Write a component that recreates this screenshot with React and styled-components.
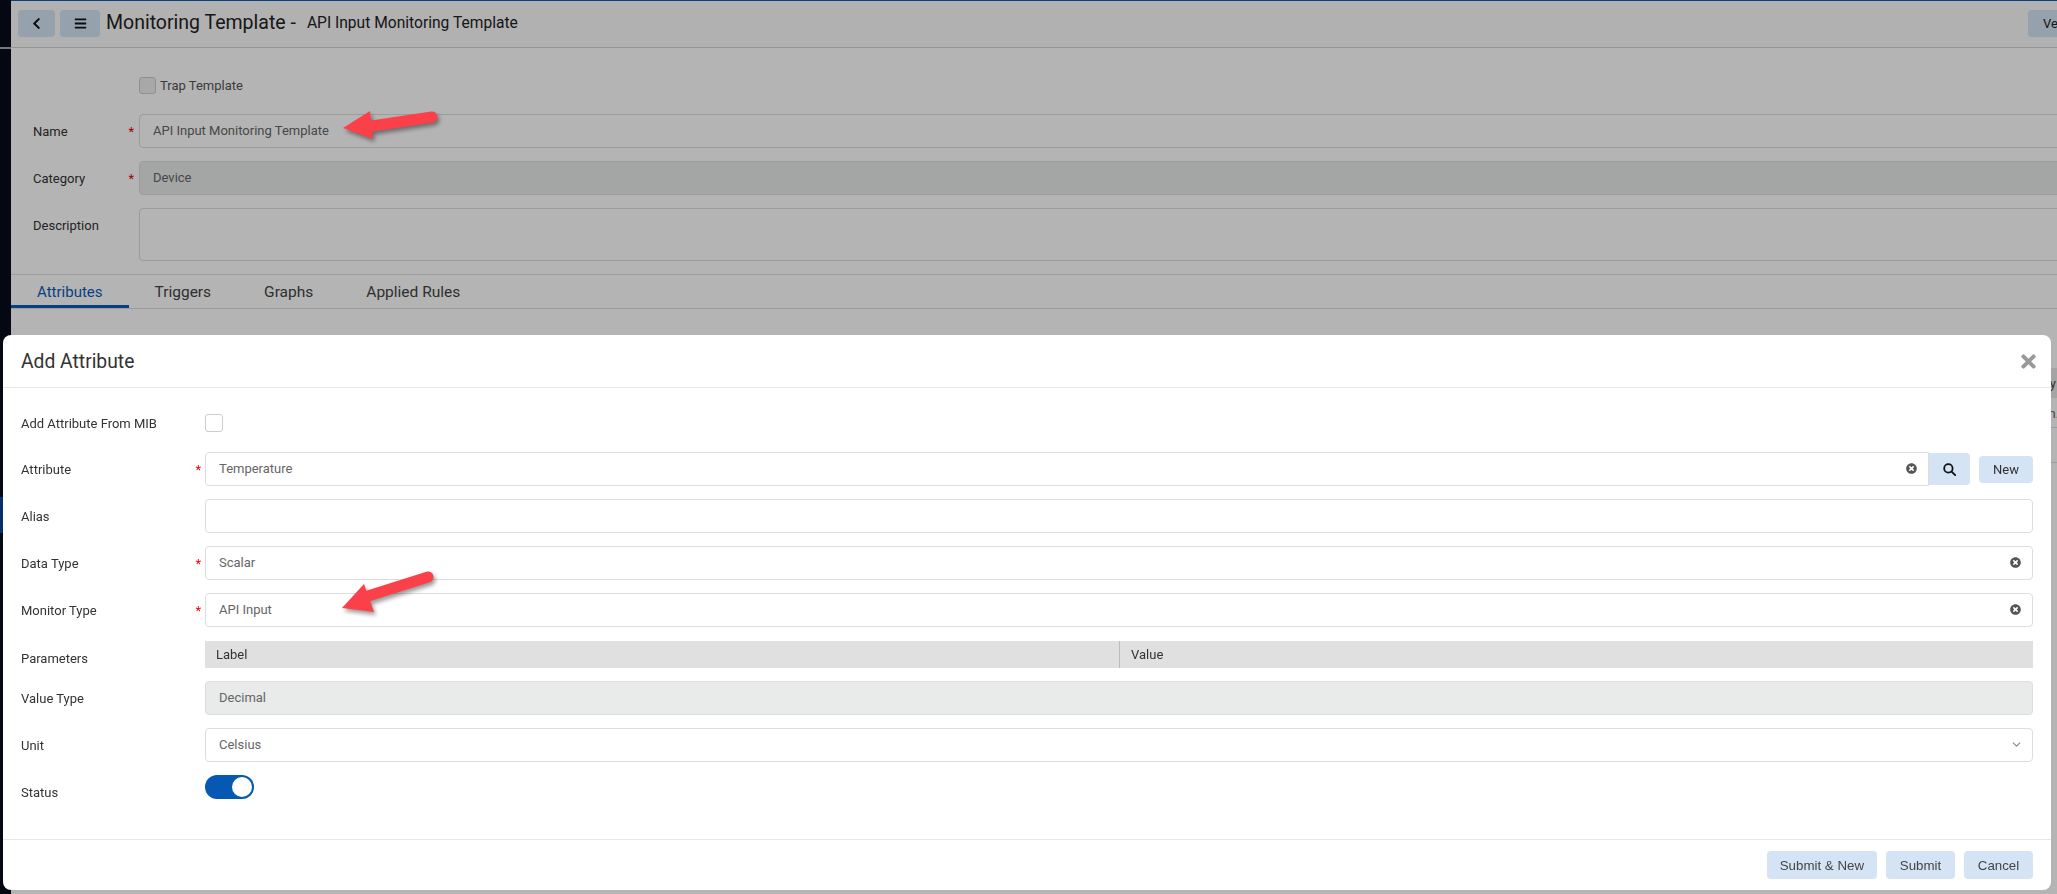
import React from "react";
import styled, { createGlobalStyle } from "styled-components";
import { FaBars, FaChevronLeft, FaTimes, FaTimesCircle } from "react-icons/fa";
import { FiChevronDown } from "react-icons/fi";

const GlobalStyle = createGlobalStyle`
  html, body {
    margin: 0;
    height: 100%;
    overflow: hidden;
    background: #fff;
    font-family: Roboto, "Liberation Sans", sans-serif;
    font-size: 13px;
    color: #333;
  }
  * { box-sizing: border-box; }
`;

const App = () => {
  return (
    <>
      <GlobalStyle />
      <Page>
        <Sidebar>
          <SidebarLogo />
          <SidebarActive />
        </Sidebar>
        <Main>
          <Header>
            <IconButton width={37}>
              <FaChevronLeft size={13} />
            </IconButton>
            <IconButton width={40}>
              <FaBars size={13} />
            </IconButton>
            <PageTitle>Monitoring Template -</PageTitle>
            <PageSubtitle>API Input Monitoring Template</PageSubtitle>
            <VersionButton>Version</VersionButton>
          </Header>
          <TemplateForm>
            <TrapRow>
              <TrapBox />
              <span>Trap Template</span>
            </TrapRow>
            <PageRow>
              <PageLabel>
                Name <Required>*</Required>
              </PageLabel>
              <Field>API Input Monitoring Template</Field>
            </PageRow>
            <PageRow>
              <PageLabel>
                Category <Required>*</Required>
              </PageLabel>
              <Field disabled>Device</Field>
            </PageRow>
            <PageRow>
              <PageLabel>Description</PageLabel>
              <TextArea />
            </PageRow>
          </TemplateForm>
          <Tabs>
            <Tab active>Attributes</Tab>
            <Tab>Triggers</Tab>
            <Tab>Graphs</Tab>
            <Tab>Applied Rules</Tab>
          </Tabs>
          <AttributeTable>
            <TableHead>Frequency</TableHead>
            <TableCell>Celsius n.</TableCell>
            <TableCell />
          </AttributeTable>
        </Main>
      </Page>

      <Backdrop>
        <Modal>
          <ModalHeader>
            <ModalTitle>Add Attribute</ModalTitle>
            <CloseIcon>
              <FaTimes size={21} />
            </CloseIcon>
          </ModalHeader>
          <ModalBody>
            <CheckRow>
              <Label>Add Attribute From MIB</Label>
              <CheckBox />
            </CheckRow>
            <Row>
              <Label>
                Attribute <Required>*</Required>
              </Label>
              <InputGroup>
                <Field>
                  Temperature
                  <ClearIcon>
                    <FaTimesCircle size={11} />
                  </ClearIcon>
                </Field>
                <SearchButton>
                  <svg width="13" height="13" viewBox="0 0 13 13" fill="none" stroke="#111" strokeWidth="1.8">
                    <circle cx="5.4" cy="5.4" r="4.2" />
                    <path d="M8.6 8.6L12.2 12.2" strokeLinecap="round" />
                  </svg>
                </SearchButton>
                <NewButton>New</NewButton>
              </InputGroup>
            </Row>
            <Row>
              <Label>Alias</Label>
              <Field />
            </Row>
            <Row>
              <Label>
                Data Type <Required>*</Required>
              </Label>
              <Field>
                Scalar
                <ClearIcon>
                  <FaTimesCircle size={11} />
                </ClearIcon>
              </Field>
            </Row>
            <Row>
              <Label>
                Monitor Type <Required>*</Required>
              </Label>
              <Field>
                API Input
                <ClearIcon>
                  <FaTimesCircle size={11} />
                </ClearIcon>
              </Field>
            </Row>
            <ParamsRow>
              <Label drop={8}>Parameters</Label>
              <ParamsHead>
                <ParamsCol>Label</ParamsCol>
                <ParamsCol>Value</ParamsCol>
              </ParamsHead>
            </ParamsRow>
            <Row>
              <Label>Value Type</Label>
              <Field disabled>Decimal</Field>
            </Row>
            <Row>
              <Label>Unit</Label>
              <Field>
                Celsius
                <ChevronIcon>
                  <FiChevronDown size={13} />
                </ChevronIcon>
              </Field>
            </Row>
            <Row>
              <Label drop={10}>Status</Label>
              <Toggle>
                <ToggleKnob />
              </Toggle>
            </Row>
          </ModalBody>
          <ModalFooter>
            <FooterButton>Submit &amp; New</FooterButton>
            <FooterButton>Submit</FooterButton>
            <FooterButton>Cancel</FooterButton>
          </ModalFooter>
        </Modal>
      </Backdrop>

      <Arrow viewBox="0 0 110 45" width="110" height="45" left={335} top={105}>
        <line x1="37" y1="21" x2="97" y2="12" />
        <polygon points="8,23 35,6 38,34" />
      </Arrow>
      <Arrow viewBox="0 0 110 55" width="110" height="55" left={335} top={565}>
        <line x1="33" y1="31" x2="93" y2="12" />
        <polygon points="7,43 29,19 39,47" />
      </Arrow>
    </>
  );
};

const Page = styled.div`
  display: flex;
  height: 894px;
  overflow: hidden;
`;

const Sidebar = styled.aside`
  flex: none;
  width: 11px;
  background: #050c1a;
`;

const SidebarLogo = styled.div`
  height: 49px;
  border-bottom: 2px solid #aaa;
  margin-bottom: 448px;
`;

const SidebarActive = styled.div`
  height: 36px;
  background: #064698;
`;

const Main = styled.main`
  flex: none;
  width: 2099px;
  border-top: 1px solid #0a5cb8;
`;

const Header = styled.header`
  display: flex;
  align-items: center;
  height: 47px;
  padding: 0 2px 2px 7px;
  border-bottom: 1px solid #d4d4d4;
  background: #fbfbfb;
`;

const IconButton = styled.button`
  display: flex;
  align-items: center;
  justify-content: center;
  width: ${(props) => props.width}px;
  height: 27px;
  margin-right: 5px;
  padding: 0;
  border: 0;
  border-radius: 4px;
  background: #d4e4f4;
  color: #111;
`;

const PageTitle = styled.h1`
  margin: 0 0 2px 1px;
  font-size: 19.5px;
  font-weight: 400;
  color: #222;
`;

const PageSubtitle = styled.h2`
  margin: 0 0 0 11px;
  font-size: 15.6px;
  font-weight: 400;
  color: #222;
`;

const VersionButton = styled.button`
  margin-left: auto;
  width: 80px;
  height: 27px;
  padding: 0 0 0 15px;
  border: 0;
  border-radius: 4px;
  background: #d4e4f4;
  font: inherit;
  text-align: left;
  color: #222;
`;

const TemplateForm = styled.section`
  padding: 29px 0 13px 22px;
  border-bottom: 1px solid #ddd;
`;

const TrapRow = styled.label`
  display: flex;
  align-items: center;
  gap: 4px;
  height: 17px;
  margin: 0 0 20px 106px;
  color: #555;
  font-size: 13px;
`;

const TrapBox = styled.span`
  width: 17px;
  height: 17px;
  border: 1px solid #ccc;
  border-radius: 3px;
  background: #eee;
`;

const PageRow = styled.div`
  display: grid;
  grid-template-columns: 106px 1fr;
  margin-bottom: 13px;

  &:last-child {
    margin-bottom: 0;
  }
`;

const PageLabel = styled.label`
  display: flex;
  justify-content: space-between;
  align-items: flex-start;
  height: 34px;
  padding: 10px 5px 0 0;
  color: #333;
`;

const Required = styled.span`
  color: #e00;
  font-size: 13px;
`;

const Field = styled.div`
  position: relative;
  flex: 1;
  display: flex;
  align-items: center;
  height: 34px;
  padding: 0 13px 2px;
  border: 1px solid #ddd;
  border-radius: 4px;
  background: ${(props) => (props.disabled ? "#e9ebeb" : "#fff")};
  color: #666;
`;

const TextArea = styled(Field)`
  height: 53px;
`;

const Tabs = styled.nav`
  display: flex;
  height: 34px;
  border-bottom: 1px solid #ddd;
`;

const Tab = styled.a`
  display: flex;
  align-items: center;
  height: 33px;
  padding: 3px ${(props) => (props.active ? 26 : 27)}px 0 26px;
  border-bottom: 3px solid ${(props) => (props.active ? "#0a5cb8" : "transparent")};
  font-size: ${(props) => (props.active ? 15 : 15.5)}px;
  color: ${(props) => (props.active ? "#0a5cb8" : "#444")};
`;

const AttributeTable = styled.section`
  margin-top: 59px;
`;

const TableHead = styled.div`
  height: 30px;
  padding: 8px 0 0 1985px;
  background: #e8e8e8;
  color: #444;
`;

const TableCell = styled.div`
  height: ${(props) => (props.children ? 30 : 35)}px;
  padding: 8px 0 0 1992px;
  border-bottom: 1px solid #ddd;
  color: #666;
  white-space: nowrap;
`;

const Backdrop = styled.div`
  position: fixed;
  inset: 0;
  padding: 335px 6px 4px 3px;
  background: rgba(0, 0, 0, 0.295);
`;

const Modal = styled.div`
  display: flex;
  flex-direction: column;
  height: 555px;
  border-radius: 8px;
  background: #fff;
`;

const ModalHeader = styled.div`
  display: flex;
  align-items: center;
  justify-content: space-between;
  flex: none;
  height: 53px;
  padding: 0 12px 0 18px;
  border-bottom: 1px solid #e6e6e6;
`;

const ModalTitle = styled.h3`
  margin: 0;
  font-size: 19.3px;
  font-weight: 400;
  color: #333;
`;

const CloseIcon = styled.span`
  display: flex;
  color: #999;
`;

const ModalBody = styled.div`
  flex: 1;
  padding: 26px 18px 0 18px;
`;

const Row = styled.div`
  display: grid;
  grid-template-columns: 184px 1fr;
  margin-bottom: 13px;
`;

const CheckRow = styled(Row)`
  align-items: center;
  margin-bottom: 20px;
`;

const ParamsRow = styled(Row)`
  padding-top: 1px;
`;

const Label = styled.label`
  display: flex;
  justify-content: space-between;
  align-items: center;
  min-height: 18px;
  padding-top: ${(props) => props.drop || 0}px;
  padding-right: 4px;
  color: #333;
`;

const CheckBox = styled.span`
  width: 18px;
  height: 18px;
  border: 1px solid #ccc;
  border-radius: 3px;
`;

const InputGroup = styled.div`
  display: flex;
  align-items: center;

  & > ${Field} {
    border-radius: 4px 0 0 4px;
  }
`;

const SearchButton = styled.button`
  display: flex;
  align-items: center;
  justify-content: center;
  flex: none;
  width: 41px;
  height: 32px;
  margin-right: 9px;
  padding: 0;
  border: 0;
  border-radius: 0 4px 4px 0;
  background: #d4e4f4;
  color: #111;
`;

const NewButton = styled.button`
  flex: none;
  width: 54px;
  height: 27px;
  padding: 0;
  border: 0;
  border-radius: 4px;
  background: #d4e4f4;
  font: inherit;
  color: #333;
`;

const ClearIcon = styled.span`
  position: absolute;
  right: 11px;
  top: 10px;
  display: flex;
  color: #555;
`;

const ChevronIcon = styled(ClearIcon)`
  right: 9px;
  top: 9px;
  color: #888;
`;

const ParamsHead = styled.div`
  display: grid;
  grid-template-columns: 914px 1fr;
  height: 27px;
  background: #e0e0e0;
`;

const ParamsCol = styled.div`
  display: flex;
  align-items: center;
  padding-left: 11px;
  color: #333;

  & + & {
    border-left: 1px solid #bbb;
  }
`;

const Toggle = styled.span`
  display: flex;
  justify-content: flex-end;
  align-items: center;
  width: 49px;
  height: 24px;
  padding: 0 2px;
  border-radius: 12px;
  background: #0559b3;
`;

const ToggleKnob = styled.span`
  width: 20px;
  height: 20px;
  border-radius: 50%;
  background: #fff;
`;

const ModalFooter = styled.div`
  display: flex;
  justify-content: flex-end;
  gap: 9px;
  flex: none;
  height: 51px;
  padding: 11px 18px 0 0;
  border-top: 1px solid #e6e6e6;
`;

const FooterButton = styled.button`
  min-width: 69px;
  height: 28px;
  padding: 0 13px;
  border: 0;
  border-radius: 4px;
  background: #d4e4f4;
  font: 13.3px "Liberation Sans", sans-serif;
  color: #444;
`;

const Arrow = styled.svg`
  position: fixed;
  left: ${(props) => props.left}px;
  top: ${(props) => props.top}px;
  overflow: visible;
  filter: drop-shadow(2px 3px 2px rgba(0, 0, 0, 0.4));

  line {
    stroke: #fb4049;
    stroke-width: 11;
    stroke-linecap: round;
  }
  polygon {
    fill: #fb4049;
  }
`;

export default App;
